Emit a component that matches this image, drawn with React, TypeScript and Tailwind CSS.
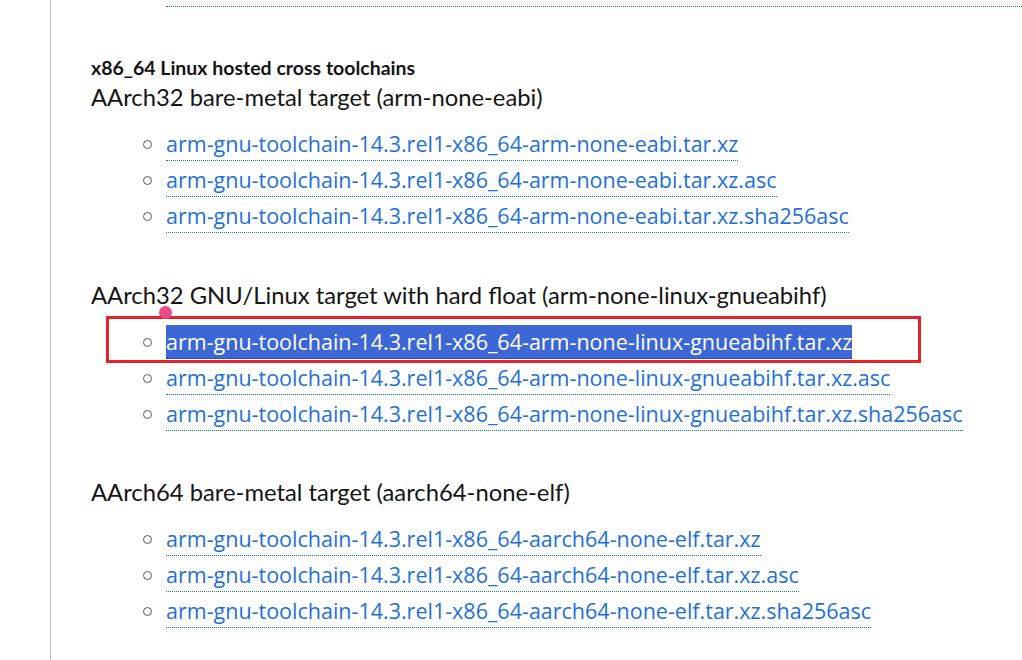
import React from "react";

const linkFont = { fontFamily: '"Open Sans", "Noto Sans", sans-serif' };

function Item({ text, selected = false }: { text: string; selected?: boolean }) {
  return (
    <li className="flex items-center h-[36px] pl-[52px] gap-[14px]">
      <span className="w-[9px] h-[9px] rounded-full border-[1.5px] border-[#5a5a5a] shrink-0" />
      <a
        href="#"
        className={
          "text-[21.5px] leading-[27px] py-[3px] whitespace-nowrap border-b border-dotted " +
          (selected
            ? "bg-[#3d67d5] text-white border-[#1b3f9a]"
            : "text-[#1d6fe0] border-[#17819a]")
        }
        style={linkFont}
      >
        {text}
      </a>
    </li>
  );
}

function Section({
  title,
  items,
  selectedIndex = -1,
  className = "",
}: {
  title: string;
  items: string[];
  selectedIndex?: number;
  className?: string;
}) {
  return (
    <section className={className}>
      <h3 className="text-[23.8px] leading-[28px] text-[#151515] font-normal">{title}</h3>
      <ul className="mt-[15px]">
        {items.map((t, i) => (
          <Item key={t} text={t} selected={i === selectedIndex} />
        ))}
      </ul>
    </section>
  );
}

export default function App() {
  const base = "arm-gnu-toolchain-14.3.rel1-x86_64-";
  return (
    <div
      className="relative w-[1022px] h-[660px] overflow-hidden bg-white"
      style={{ fontFamily: 'Lato, "Noto Sans", sans-serif' }}
    >
      <div className="ml-[50px] h-full border-l border-[#c4c4c4] pl-[40px]">
        <div className="h-[7px] overflow-hidden flex items-end">
          <div className="pl-[75px] w-[1200px]">
            <a
              href="#"
              className="block text-[21.5px] leading-[27px] pb-[1px] whitespace-nowrap text-[#1d6fe0] border-b border-dotted border-[#17819a] -mb-[0px]"
              style={linkFont}
            >
              <span className="relative top-[-5px]">
                arm-gnu-toolchain-14.3.rel1-x86_64-aarch64_be-none-linux-gnu.tar.xz.sha256asc
              </span>
            </a>
          </div>
        </div>

        <h2 className="mt-[50px] text-[19.5px] leading-[22px] font-bold text-[#151515]">
          x86_64 Linux hosted cross toolchains
        </h2>

        <Section
          className="mt-[4px]"
          title="AArch32 bare-metal target (arm-none-eabi)"
          items={[
            base + "arm-none-eabi.tar.xz",
            base + "arm-none-eabi.tar.xz.asc",
            base + "arm-none-eabi.tar.xz.sha256asc",
          ]}
        />
        <Section
          className="mt-[47px]"
          title="AArch32 GNU/Linux target with hard float (arm-none-linux-gnueabihf)"
          selectedIndex={0}
          items={[
            base + "arm-none-linux-gnueabihf.tar.xz",
            base + "arm-none-linux-gnueabihf.tar.xz.asc",
            base + "arm-none-linux-gnueabihf.tar.xz.sha256asc",
          ]}
        />
        <Section
          className="mt-[46px]"
          title="AArch64 bare-metal target (aarch64-none-elf)"
          items={[
            base + "aarch64-none-elf.tar.xz",
            base + "aarch64-none-elf.tar.xz.asc",
            base + "aarch64-none-elf.tar.xz.sha256asc",
          ]}
        />
      </div>

      {/* annotation overlays */}
      <div className="absolute left-[106px] top-[316px] w-[815px] h-[47px] border-[3px] border-[#e8202a] pointer-events-none" />
      <div className="absolute left-[159px] top-[306px] w-[13px] h-[13px] rounded-full bg-[#ea4a85]" />
    </div>
  );
}
